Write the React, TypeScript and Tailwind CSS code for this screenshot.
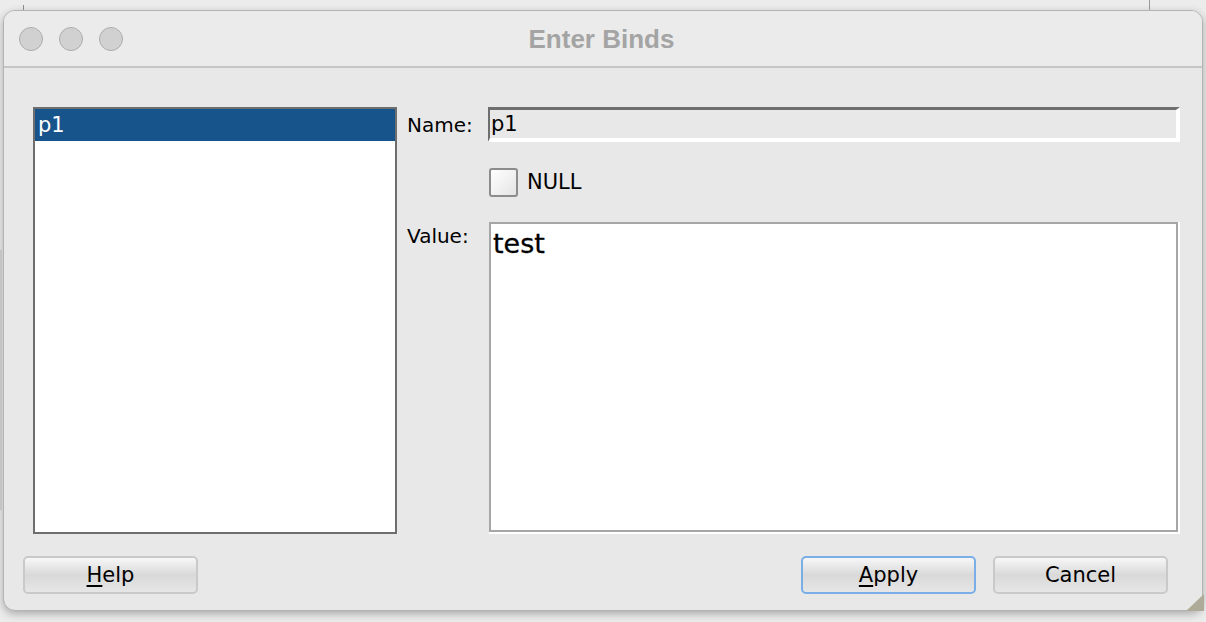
import React from 'react';

const btn =
  "h-[38px] w-[175px] rounded-[5px] border-2 bg-linear-to-b from-[#f7f7f7] via-[#d9d9d9] to-[#e6e6e6] text-[21px] leading-none text-black flex items-center justify-center";

function TrafficLight() {
  return <div className="w-[24px] h-[24px] rounded-full bg-[#d1d1d1] border border-[#adadad]" />;
}

export default function App() {
  return (
    <div className="relative w-[1206px] h-[622px] overflow-hidden bg-[#ececec] pt-[10px] px-[3px] font-['DejaVu_Sans',sans-serif]">
      {/* bits of windows behind */}
      <div className="absolute left-[23px] top-[5px] w-px h-[5px] bg-[#8a8a8a]" />
      <div className="absolute left-[1149px] top-0 w-px h-[10px] bg-[#9a9a9a]" />
      <div className="absolute left-0 top-[250px] w-[2px] h-[260px] bg-[#c4c4c4]" />

      <div className="w-[1200px] h-[601px] rounded-[12px] border border-[#b3b3b3] bg-[#e8e8e8] flex flex-col overflow-hidden shadow-[0_3px_8px_rgba(0,0,0,0.28)]">
        {/* title bar */}
        <div className="h-[57px] shrink-0 bg-[#ebebeb] border-b-2 border-[#c6c6c6] grid grid-cols-[1fr_auto_1fr] items-center">
          <div className="flex items-center gap-[16px] pl-[15px]">
            <TrafficLight />
            <TrafficLight />
            <TrafficLight />
          </div>
          <div className="font-['Liberation_Sans',sans-serif] font-bold text-[26px] text-[#a4a4a4] leading-none pr-[3px]">
            Enter Binds
          </div>
          <div />
        </div>

        {/* body */}
        <div className="flex-1 flex flex-col pt-[39px]">
          <div className="flex gap-[10px] h-[427px] pl-[29px] pr-[22px]">
            {/* bind list */}
            <div className="w-[364px] border-2 border-[#6e6e6e] bg-white">
              <div className="h-[32px] bg-[#18548c] text-white text-[21px] leading-[32px] pl-[3px]">p1</div>
            </div>

            {/* fields */}
            <div className="flex-1 flex flex-col">
              <div className="h-[35px] flex items-center">
                <div className="w-[81px] text-[20px] leading-[24px] text-black">Name:</div>
                <div className="flex-1 h-full border-t-[3px] border-l-2 border-t-[#6e6e6e] border-l-[#6e6e6e] border-b-4 border-r-4 border-b-white border-r-white bg-[#e8e8e8] text-[21px] leading-[28px] pl-[1px] text-black">
                  p1
                </div>
              </div>

              <div className="h-[80px] flex items-center gap-[9px] pl-[82px]">
                <div className="w-[29px] h-[29px] rounded-[3px] border-2 border-[#8c8c8c] bg-linear-to-br from-white to-[#e4e4e4]" />
                <span className="text-[21px] leading-none text-black">NULL</span>
              </div>

              <div className="flex-1 flex">
                <div className="w-[82px] text-[20px] leading-[24px] mt-[2px] text-black">Value:</div>
                <div className="flex-1 border-r-2 border-b-2 border-white">
                  <div className="h-full border-2 border-[#a6a6a6] bg-white text-[27px] leading-[32px] pt-[4px] pl-[2px] text-black [-webkit-text-stroke:0.3px_black]">
                    test
                  </div>
                </div>
              </div>
            </div>
          </div>

          {/* buttons */}
          <div className="mt-[22px] flex items-center pl-[19px] pr-[34px]">
            <button className={`${btn} border-[#c9c9c9]`}>
              <span><span className="underline underline-offset-[3px]">H</span>elp</span>
            </button>
            <div className="flex-1" />
            <button className={`${btn} w-[174px] border-[#79aee6]`}>
              <span><span className="underline underline-offset-[3px]">A</span>pply</span>
            </button>
            <button className={`${btn} ml-[17px] border-[#c9c9c9]`}>Cancel</button>
          </div>
        </div>
      </div>

      {/* resize corner behind window */}
      <svg className="absolute left-[1186px] top-[594px]" width="18" height="17" viewBox="0 0 18 17">
        <polygon points="18,0 18,17 0,17" fill="#aeac98" />
      </svg>
    </div>
  );
}
